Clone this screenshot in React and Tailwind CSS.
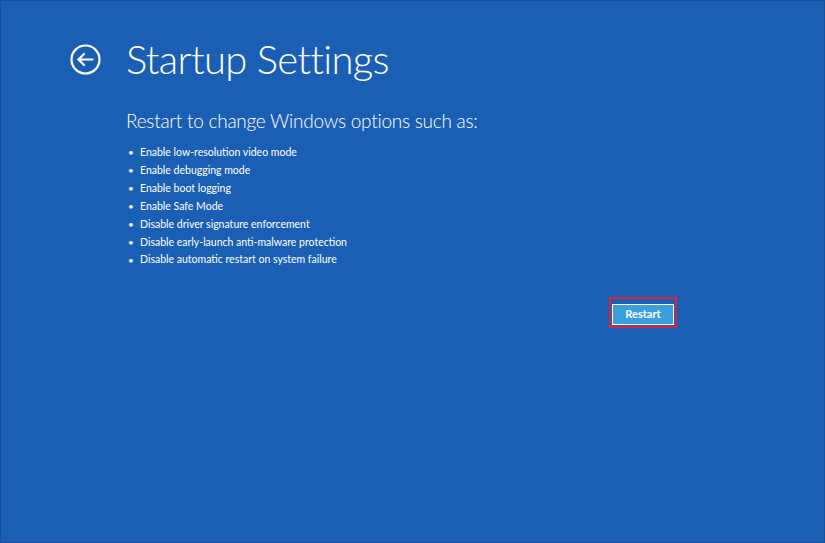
const options = [
  'Enable low-resolution video mode',
  'Enable debugging mode',
  'Enable boot logging',
  'Enable Safe Mode',
  'Disable driver signature enforcement',
  'Disable early-launch anti-malware protection',
  'Disable automatic restart on system failure'
];

function BackIcon() {
  return (
    <svg width="31" height="31" viewBox="0 0 31 31" fill="none" stroke="white" strokeWidth="2.2">
      <circle cx="15.5" cy="15.5" r="14" />
      <path d="M8.5 15.5h14" strokeLinecap="round" />
      <path d="M14 10l-5.5 5.5L14 21" strokeLinecap="round" strokeLinejoin="round" />
    </svg>
  );
}

export default function App() {
  return (
    <div
      className="h-[543px] w-[825px] overflow-hidden border border-[#174f9c] bg-[#1b5fb5] text-white"
      style={{ fontFamily: 'Lato, "Noto Sans", sans-serif' }}
    >
      <div className="pl-[69px] pt-[41px]">
        <div className="flex items-center gap-[25px]">
          <BackIcon />
          <h1 className="text-[40px] font-light leading-[34px] tracking-[-0.7px]">Startup Settings</h1>
        </div>

        <div className="pl-[56px] pt-[32px]">
          <h2 className="text-[19px] font-light leading-[26px] tracking-[-0.25px]">
            Restart to change Windows options such as:
          </h2>

          <ul className="mt-[10px]">
            {options.map((option) => (
              <li key={option} className="flex h-[17.9px] items-center text-[10.5px]">
                <span className="w-[14px] pl-[2px] text-[10px]">•</span>
                {option}
              </li>
            ))}
          </ul>

          <div className="flex justify-end pr-[147px] pt-[28px]">
            <div className="border-2 border-[#d8243a] p-px">
              <button className="h-[21px] w-[62px] border border-white bg-[#3a9fdf] text-[11px] font-bold text-white">
                Restart
              </button>
            </div>
          </div>
        </div>
      </div>
    </div>
  );
}
